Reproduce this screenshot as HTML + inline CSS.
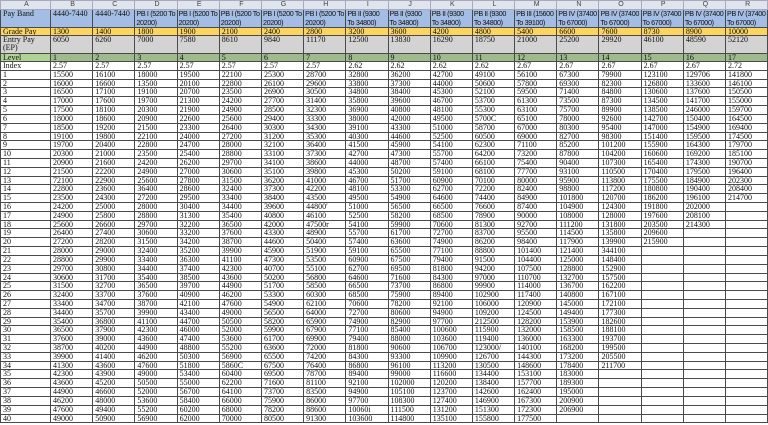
<!DOCTYPE html>
<html><head><meta charset="utf-8"><style>
html,body{margin:0;padding:0;background:#fff;width:768px;height:425px;overflow:hidden}
table{border-collapse:collapse;table-layout:fixed;width:768px;font-family:"Liberation Serif",serif;font-size:8px;color:#111}
td{border:1px solid #4a4a4a;padding:0 0 0 2px;white-space:nowrap;overflow:hidden;vertical-align:top;line-height:7px}
tr{height:8.82px}
tr.h{height:9px}
tr.h td{background:#dfe5ee;color:#444;text-align:center;font-family:"Liberation Sans",sans-serif;font-size:7px;border-color:#aab}
tr.pb{height:18px}
tr.pb td{background:#a3bde4;font-family:"Liberation Sans",sans-serif;font-size:7.2px;letter-spacing:-0.35px;line-height:8.5px;padding-left:1px}
tr.pb td:first-child,tr.pb td:nth-child(2),tr.pb td:nth-child(3){font-family:"Liberation Serif",serif;font-size:8px;letter-spacing:0;padding-left:2px}
tr.gp{height:8px}
tr.gp td{background:#fdd55e}
tr.ep{height:18px}
tr.ep td{background:#d3d3d3;line-height:8px}
tr.lv{height:8px}
tr.lv td{background:#9fbb8d}
tr.lv td:first-child{background:#aed393}
</style></head><body>
<table>
<colgroup><col style="width:50px"><col span="17" style="width:42.2px"></colgroup>
<tr class="h"><td>A</td><td>B</td><td>C</td><td>D</td><td>E</td><td>F</td><td>G</td><td>H</td><td>I</td><td>J</td><td>K</td><td>L</td><td>M</td><td>N</td><td>O</td><td>P</td><td>Q</td><td>R</td></tr>
<tr class="pb"><td>Pay Band</td><td>4440-7440</td><td>4440-7440</td><td>PB I (5200 To<br>20200)</td><td>PB I (5200 To<br>20200)</td><td>PB I (5200 To<br>20200)</td><td>PB I (5200 To<br>20200)</td><td>PB I (5200 To<br>20200)</td><td>PB II (9300<br>To 34800)</td><td>PB II (9300<br>To 34800)</td><td>PB II (9300<br>To 34800)</td><td>PB II (9300<br>To 34800)</td><td>PB III (15600<br>To 39100)</td><td>PB IV (37400<br>To 67000)</td><td>PB IV (37400<br>To 67000)</td><td>PB IV (37400<br>To 67000)</td><td>PB IV (37400<br>To 67000)</td><td>PB IV (37400<br>To 67000)</td></tr>
<tr class="gp"><td>Grade Pay</td><td>1300</td><td>1400</td><td>1800</td><td>1900</td><td>2100</td><td>2400</td><td>2800</td><td>3200</td><td>3600</td><td>4200</td><td>4800</td><td>5400</td><td>6600</td><td>7600</td><td>8730</td><td>8900</td><td>10000</td></tr>
<tr class="ep"><td>Entry Pay<br>(EP)</td><td>6050</td><td>6260</td><td>7000</td><td>7580</td><td>8610</td><td>9840</td><td>11170</td><td>12500</td><td>13830</td><td>16290</td><td>18750</td><td>21000</td><td>25200</td><td>29920</td><td>46100</td><td>48590</td><td>52120</td></tr>
<tr class="lv"><td>Level</td><td>1</td><td>2</td><td>3</td><td>4</td><td>5</td><td>6</td><td>7</td><td>8</td><td>9</td><td>10</td><td>11</td><td>12</td><td>13</td><td>14</td><td>15</td><td>16</td><td>17</td></tr>
<tr><td>Index</td><td>2.57</td><td>2.57</td><td>2.57</td><td>2.57</td><td>2.57</td><td>2.57</td><td>2.57</td><td>2.62</td><td>2.62</td><td>2.62</td><td>2.62</td><td>2.67</td><td>2.67</td><td>2.67</td><td>2.67</td><td>2.67</td><td>2.72</td></tr>
<tr><td>1</td><td>15500</td><td>16100</td><td>18000</td><td>19500</td><td>22100</td><td>25300</td><td>28700</td><td>32800</td><td>36200</td><td>42700</td><td>49100</td><td>56100</td><td>67300</td><td>79900</td><td>123100</td><td>129706</td><td>141800</td></tr>
<tr><td>2</td><td>16000</td><td>16600</td><td>13500</td><td>20100</td><td>22800</td><td>26100</td><td>29600</td><td>33800</td><td>37300</td><td>44000</td><td>50600</td><td>57800</td><td>69300</td><td>82300</td><td>126800</td><td>133600</td><td>146100</td></tr>
<tr><td>3</td><td>16500</td><td>17100</td><td>19100</td><td>20700</td><td>23500</td><td>26900</td><td>30500</td><td>34800</td><td>38400</td><td>45300</td><td>52100</td><td>59500</td><td>71400</td><td>84800</td><td>130600</td><td>137600</td><td>150500</td></tr>
<tr><td>4</td><td>17000</td><td>17600</td><td>19700</td><td>21300</td><td>24200</td><td>27700</td><td>31400</td><td>35800</td><td>39600</td><td>46700</td><td>53700</td><td>61300</td><td>73500</td><td>87300</td><td>134500</td><td>141700</td><td>155000</td></tr>
<tr><td>5</td><td>17500</td><td>18100</td><td>20300</td><td>21900</td><td>24900</td><td>28500</td><td>32300</td><td>36900</td><td>40800</td><td>48100</td><td>55300</td><td>63100</td><td>75700</td><td>89900</td><td>138500</td><td>246000</td><td>159700</td></tr>
<tr><td>6</td><td>18000</td><td>18600</td><td>20900</td><td>22600</td><td>25600</td><td>29400</td><td>33300</td><td>38000</td><td>42000</td><td>49500</td><td>5700C</td><td>65100</td><td>78000</td><td>92600</td><td>142700</td><td>150400</td><td>164500</td></tr>
<tr><td>7</td><td>18500</td><td>19200</td><td>21500</td><td>23300</td><td>26400</td><td>30300</td><td>34300</td><td>39100</td><td>43300</td><td>51000</td><td>58700</td><td>67000</td><td>80300</td><td>95400</td><td>147000</td><td>154900</td><td>169400</td></tr>
<tr><td>8</td><td>19100</td><td>19800</td><td>22100</td><td>24000</td><td>27200</td><td>31200</td><td>35300</td><td>40300</td><td>44600</td><td>52500</td><td>60500</td><td>69000</td><td>82700</td><td>98300</td><td>151400</td><td>159500</td><td>174500</td></tr>
<tr><td>9</td><td>19700</td><td>20400</td><td>22800</td><td>24700</td><td>28000</td><td>32100</td><td>36400</td><td>41500</td><td>45900</td><td>54100</td><td>62300</td><td>71100</td><td>85200</td><td>101200</td><td>155900</td><td>164300</td><td>179700</td></tr>
<tr><td>10</td><td>20300</td><td>21000</td><td>23500</td><td>25400</td><td>28800</td><td>33100</td><td>37300</td><td>42700</td><td>47300</td><td>55700</td><td>64200</td><td>73200</td><td>87800</td><td>104200</td><td>160600</td><td>169200</td><td>185100</td></tr>
<tr><td>11</td><td>20900</td><td>21600</td><td>24200</td><td>26200</td><td>29700</td><td>34100</td><td>38600</td><td>44000</td><td>48700</td><td>57400</td><td>66100</td><td>75400</td><td>90400</td><td>107300</td><td>165400</td><td>174300</td><td>190700</td></tr>
<tr><td>12</td><td>21500</td><td>22200</td><td>24900</td><td>27000</td><td>30600</td><td>35100</td><td>39800</td><td>45300</td><td>50200</td><td>59100</td><td>68100</td><td>77700</td><td>93100</td><td>110500</td><td>170400</td><td>179500</td><td>196400</td></tr>
<tr><td>13</td><td>72100</td><td>22900</td><td>25600</td><td>27800</td><td>31500</td><td>36200</td><td>41000</td><td>46700</td><td>51700</td><td>60900</td><td>70100</td><td>80000</td><td>95900</td><td>113800</td><td>175500</td><td>184900</td><td>202300</td></tr>
<tr><td>14</td><td>22800</td><td>23600</td><td>36400</td><td>28600</td><td>32400</td><td>37300</td><td>42200</td><td>48100</td><td>53300</td><td>62700</td><td>72200</td><td>82400</td><td>98800</td><td>117200</td><td>180800</td><td>190400</td><td>208400</td></tr>
<tr><td>15</td><td>23500</td><td>24300</td><td>27200</td><td>29500</td><td>33400</td><td>38400</td><td>43500</td><td>49500</td><td>54900</td><td>64600</td><td>74400</td><td>84900</td><td>101800</td><td>120700</td><td>186200</td><td>196100</td><td>214700</td></tr>
<tr><td>16</td><td>24200</td><td>25000</td><td>28000</td><td>30400</td><td>34400</td><td>39600</td><td>44800'</td><td>51000</td><td>56500</td><td>66500</td><td>76600</td><td>87400</td><td>104900</td><td>124300</td><td>191800</td><td>202000</td><td></td></tr>
<tr><td>17</td><td>24900</td><td>25800</td><td>28800</td><td>31300</td><td>35400</td><td>40800</td><td>46100</td><td>52500</td><td>58200</td><td>68500</td><td>78900</td><td>90000</td><td>108000</td><td>128000</td><td>197600</td><td>208100</td><td></td></tr>
<tr><td>18</td><td>25600</td><td>26600</td><td>29700</td><td>32200</td><td>36500</td><td>42000</td><td>47500r</td><td>54100</td><td>59900</td><td>70600</td><td>81300</td><td>92700</td><td>111200</td><td>131800</td><td>203500</td><td>214300</td><td></td></tr>
<tr><td>19</td><td>26400</td><td>27400</td><td>30600</td><td>33200</td><td>37600</td><td>43300</td><td>48900</td><td>55700</td><td>61700</td><td>72700</td><td>83700</td><td>95500</td><td>114500</td><td>135800</td><td>209600</td><td></td><td></td></tr>
<tr><td>20</td><td>27200</td><td>28200</td><td>31500</td><td>34200</td><td>38700</td><td>44600</td><td>50400</td><td>57400</td><td>63600</td><td>74900</td><td>86200</td><td>98400</td><td>117900</td><td>139900</td><td>215900</td><td></td><td></td></tr>
<tr><td>21</td><td>28000</td><td>29000</td><td>32400</td><td>35200</td><td>39900</td><td>45900</td><td>51900</td><td>59100</td><td>65500</td><td>77100</td><td>88800</td><td>101400</td><td>121400</td><td>344100</td><td></td><td></td><td></td></tr>
<tr><td>22</td><td>28800</td><td>29900</td><td>33400</td><td>36300</td><td>41100</td><td>47300</td><td>53500</td><td>60900</td><td>67500</td><td>79400</td><td>91500</td><td>104400</td><td>125000</td><td>148400</td><td></td><td></td><td></td></tr>
<tr><td>23</td><td>29700</td><td>30800</td><td>34400</td><td>37400</td><td>42300</td><td>40700</td><td>55100</td><td>62700</td><td>69500</td><td>81800</td><td>94200</td><td>107500</td><td>128800</td><td>152900</td><td></td><td></td><td></td></tr>
<tr><td>24</td><td>30600</td><td>31700</td><td>35400</td><td>38500</td><td>43600</td><td>50200</td><td>56800</td><td>64600</td><td>71600</td><td>84300</td><td>97000</td><td>110700</td><td>132700</td><td>157500</td><td></td><td></td><td></td></tr>
<tr><td>25</td><td>31500</td><td>32700</td><td>36500</td><td>39700</td><td>44900</td><td>51700</td><td>58500</td><td>66500</td><td>73700</td><td>86800</td><td>99900</td><td>114000</td><td>136700</td><td>162200</td><td></td><td></td><td></td></tr>
<tr><td>26</td><td>32400</td><td>33700</td><td>37600</td><td>40900</td><td>46200</td><td>53300</td><td>60300</td><td>68500</td><td>75900</td><td>89400</td><td>102900</td><td>117400</td><td>140800</td><td>167100</td><td></td><td></td><td></td></tr>
<tr><td>27</td><td>33400</td><td>34700</td><td>38700</td><td>42100</td><td>47600</td><td>54900</td><td>62100</td><td>70600</td><td>78200</td><td>92100</td><td>106000</td><td>120900</td><td>145000</td><td>172100</td><td></td><td></td><td></td></tr>
<tr><td>28</td><td>34400</td><td>35700</td><td>39900</td><td>43400</td><td>49000</td><td>56500</td><td>64000</td><td>72700</td><td>80600</td><td>94900</td><td>109200</td><td>124500</td><td>149400</td><td>177300</td><td></td><td></td><td></td></tr>
<tr><td>29</td><td>35400</td><td>36800</td><td>41100</td><td>44700</td><td>50500</td><td>58200</td><td>65900</td><td>74900</td><td>82900</td><td>97700</td><td>212500</td><td>128200</td><td>153900</td><td>182600</td><td></td><td></td><td></td></tr>
<tr><td>30</td><td>36500</td><td>37900</td><td>42300</td><td>46000</td><td>52000</td><td>59900</td><td>67900</td><td>77100</td><td>85400</td><td>100600</td><td>115900</td><td>132000</td><td>158500</td><td>188100</td><td></td><td></td><td></td></tr>
<tr><td>31</td><td>37600</td><td>39000</td><td>43600</td><td>47400</td><td>53600</td><td>61700</td><td>69900</td><td>79400</td><td>88000</td><td>103600</td><td>119400</td><td>136000</td><td>163300</td><td>193700</td><td></td><td></td><td></td></tr>
<tr><td>32</td><td>38700</td><td>40200</td><td>44900</td><td>48800</td><td>55200</td><td>63600</td><td>72000</td><td>81800</td><td>90600</td><td>106700</td><td>123000/</td><td>140100</td><td>168200</td><td>199500</td><td></td><td></td><td></td></tr>
<tr><td>33</td><td>39900</td><td>41400</td><td>46200</td><td>50300</td><td>56900</td><td>65500</td><td>74200</td><td>84300</td><td>93300</td><td>109900</td><td>126700</td><td>144300</td><td>173200</td><td>205500</td><td></td><td></td><td></td></tr>
<tr><td>34</td><td>41300</td><td>43600</td><td>47600</td><td>51800</td><td>5860C</td><td>67500</td><td>76400</td><td>86800</td><td>96100</td><td>113200</td><td>130500</td><td>148600</td><td>178400</td><td>211700</td><td></td><td></td><td></td></tr>
<tr><td>35</td><td>42300</td><td>43900</td><td>49000</td><td>53400</td><td>60400</td><td>69500</td><td>78700</td><td>89400</td><td>99000</td><td>116600</td><td>134400</td><td>153100</td><td>183000</td><td></td><td></td><td></td><td></td></tr>
<tr><td>36</td><td>43600</td><td>45200</td><td>50500</td><td>55000</td><td>62200</td><td>71600</td><td>81100</td><td>92100</td><td>102000</td><td>120200</td><td>138400</td><td>157700</td><td>189300</td><td></td><td></td><td></td><td></td></tr>
<tr><td>37</td><td>44900</td><td>46600</td><td>52000</td><td>56700</td><td>64100</td><td>73700</td><td>83500</td><td>94900</td><td>105100</td><td>123700</td><td>142600</td><td>162400</td><td>195000</td><td></td><td></td><td></td><td></td></tr>
<tr><td>38</td><td>46200</td><td>48000</td><td>53600</td><td>58400</td><td>66000</td><td>75900</td><td>86000</td><td>97700</td><td>108300</td><td>127400</td><td>146900</td><td>167300</td><td>200900</td><td></td><td></td><td></td><td></td></tr>
<tr><td>39</td><td>47600</td><td>49400</td><td>55200</td><td>60200</td><td>68000</td><td>78200</td><td>88600</td><td>10060i</td><td>111500</td><td>131200</td><td>151300</td><td>172300</td><td>206900</td><td></td><td></td><td></td><td></td></tr>
<tr><td>40</td><td>49000</td><td>50900</td><td>56900</td><td>62000</td><td>70000</td><td>80500</td><td>91300</td><td>103600</td><td>114800</td><td>135100</td><td>155800</td><td>177500</td><td></td><td></td><td></td><td></td><td></td></tr>
</table>
</body></html>
